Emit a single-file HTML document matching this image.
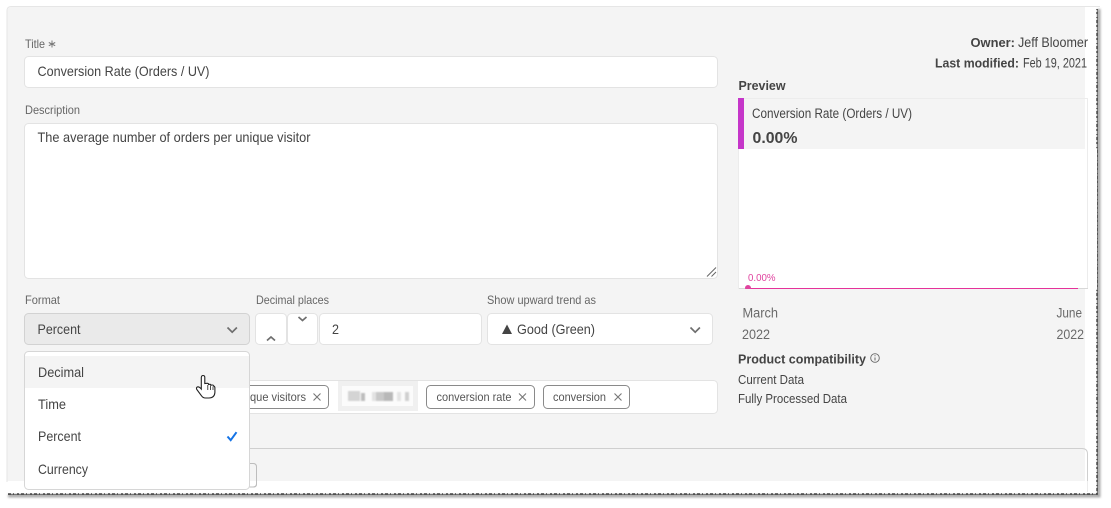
<!DOCTYPE html>
<html><head><meta charset="utf-8"><style>
html,body{margin:0;padding:0;background:#fff;width:1111px;height:508px;overflow:hidden}
svg{display:block}
text{font-family:"Liberation Sans",sans-serif;fill:#444;font-size:14px}
.l{fill:#666;font-size:12px}
.t{font-size:12px;fill:#555}
.b{font-weight:bold;font-size:13px;fill:#444}
.ax{fill:#6a6a6a;font-size:13.5px}
.i{fill:#fff;stroke:#e3e3e3}
.ch{fill:none;stroke:#6e6e6e;stroke-width:1.7}
.x{fill:none;stroke:#777;stroke-width:1.1}
.tag{fill:#fff;stroke:#8a8a8a;stroke-width:1}
</style></head><body>
<svg width="1111" height="508" viewBox="0 0 1111 508" xmlns="http://www.w3.org/2000/svg">
<defs>
<filter id="sh" x="-5%" y="-5%" width="110%" height="110%"><feGaussianBlur stdDeviation="1"/></filter>
<filter id="bl" x="-10%" y="-10%" width="120%" height="120%"><feGaussianBlur stdDeviation="0.7"/></filter>
</defs>
<rect width="1111" height="508" fill="#fff"/>
<!-- torn edge -->
<path d="M8 496H1099V9" fill="none" stroke="#a8a8a8" stroke-width="3" filter="url(#sh)"/>
<path d="M8 494.500H1097.500V9" fill="none" stroke="#777" stroke-width="1.2"/>
<path d="M8 494H1097V9" fill="none" stroke="#444" stroke-width="1.4" stroke-dasharray="3 2 1 3 2 2"/>
<rect x="8" y="8" width="1088" height="485" fill="#fff"/>
<path d="M7 482V11Q7 6.500 11 6.500H1100" fill="none" stroke="#e6e6e6"/>
<path d="M7.500 11Q7.500 7 11 7H1085V481H7.500Z" fill="#f4f4f4"/>

<text class="l" x="25" y="48" textLength="20" lengthAdjust="spacingAndGlyphs">Title</text>
<path d="M52 40.500v7M48.800 42.500l6.400 3.200M55.200 42.500l-6.400 3.200" stroke="#777" stroke-width="1" fill="none"/>
<rect class="i" x="24.500" y="56.500" width="693" height="31" rx="4"/>
<text x="37.500" y="76" textLength="172" lengthAdjust="spacingAndGlyphs">Conversion Rate (Orders / UV)</text>
<text class="l" x="25" y="114" textLength="55" lengthAdjust="spacingAndGlyphs">Description</text>
<rect class="i" x="24.500" y="123.500" width="693" height="155" rx="4"/>
<text x="37.500" y="142" textLength="273" lengthAdjust="spacingAndGlyphs">The average number of orders per unique visitor</text>
<path d="M707 276.500l9-9M711.500 276.500l4.500-4.500" stroke="#666" stroke-width="1"/>

<text class="l" x="25" y="304" textLength="35" lengthAdjust="spacingAndGlyphs">Format</text>
<text class="l" x="256" y="304" textLength="73" lengthAdjust="spacingAndGlyphs">Decimal places</text>
<text class="l" x="487" y="304" textLength="109" lengthAdjust="spacingAndGlyphs">Show upward trend as</text>

<rect x="24.500" y="313.500" width="225" height="31" rx="4" fill="#eaeaea" stroke="#d2d2d2"/>
<text x="37.500" y="334" textLength="43" lengthAdjust="spacingAndGlyphs">Percent</text>
<path class="ch" d="M227.500 327.500l4.700 4.700 4.700-4.700"/>

<rect class="i" x="255.500" y="313.500" width="31" height="31" rx="4"/>
<path class="ch" d="M267 340.500l4-3.500 4 3.500"/>
<rect class="i" x="287.500" y="313.500" width="30" height="31" rx="4"/>
<path class="ch" d="M298.500 317l4 3.500 4-3.500"/>
<rect class="i" x="319.500" y="313.500" width="162" height="31" rx="4"/>
<text x="332" y="334" textLength="7" lengthAdjust="spacingAndGlyphs">2</text>

<rect class="i" x="487.500" y="313.500" width="225" height="31" rx="4"/>
<path d="M502 334l5-9.500 5 9.500z" fill="#444"/>
<text x="517" y="334" textLength="78" lengthAdjust="spacingAndGlyphs">Good (Green)</text>
<path class="ch" d="M690.500 327.500l4.700 4.700 4.700-4.700"/>

<!-- tags -->
<rect class="i" x="230.500" y="380.500" width="487" height="33" rx="4"/>
<rect class="tag" x="200.500" y="385.500" width="128" height="23" rx="4"/>
<text class="t" x="250" y="401" textLength="56" lengthAdjust="spacingAndGlyphs">que visitors</text>
<path class="x" d="M313.500 393.500l7 7M320.500 393.500l-7 7"/>
<rect x="338" y="381" width="80" height="30" fill="#f0f0f0"/>
<rect x="342" y="386" width="71" height="20" fill="#fbfbfb"/>
<g filter="url(#bl)">
<rect x="348" y="391" width="12" height="10" fill="#d4d4d4"/>
<rect x="361" y="393" width="4" height="8" fill="#bdbdbd"/>
<rect x="372" y="392" width="4" height="9" fill="#e2e2e2"/>
<rect x="376" y="392" width="8" height="9" fill="#c8c8c8"/>
<rect x="384" y="392" width="9" height="9" fill="#b8b8b8"/>
<rect x="397" y="392" width="4" height="9" fill="#e4e4e4"/>
<rect x="405" y="392" width="4" height="9" fill="#d0d0d0"/>
</g>
<rect class="tag" x="426.500" y="385.500" width="108" height="23" rx="4"/>
<text class="t" x="436.500" y="401" textLength="75" lengthAdjust="spacingAndGlyphs">conversion rate</text>
<path class="x" d="M519 393.500l7 7M526 393.500l-7 7"/>
<rect class="tag" x="543.500" y="385.500" width="86" height="23" rx="4"/>
<text class="t" x="553" y="401" textLength="53" lengthAdjust="spacingAndGlyphs">conversion</text>
<path class="x" d="M614.500 393.500l7 7M621.500 393.500l-7 7"/>

<!-- lower box -->
<path d="M24 448.500H1082Q1087.500 448.500 1087.500 454V481" fill="none" stroke="#cfcfcf"/>
<rect x="7.500" y="481" width="1078" height="12" fill="#fff"/>
<path d="M1087.500 481V492" stroke="#ececec"/>
<path d="M240 463.500h13q3.500 0 3.500 3.500v17q0 3-3.500 3h-13" fill="#fff" stroke="#bdbdbd"/>
<rect x="240" y="464" width="16" height="17" fill="#f4f4f4"/>
<path d="M240 463.500h13q3.500 0 3.500 3.500v17q0 3-3.500 3h-13" fill="none" stroke="#bdbdbd"/>

<!-- popup -->
<rect x="24.500" y="351.500" width="225" height="138" rx="4" fill="#fff" stroke="#d6d6d6"/>
<rect x="25" y="356" width="224" height="32" fill="#f4f4f4"/>
<text x="38" y="377" textLength="46" lengthAdjust="spacingAndGlyphs">Decimal</text>
<text x="38" y="409" textLength="28" lengthAdjust="spacingAndGlyphs">Time</text>
<text x="38" y="441" textLength="43" lengthAdjust="spacingAndGlyphs">Percent</text>
<text x="38" y="474" textLength="50" lengthAdjust="spacingAndGlyphs">Currency</text>
<path d="M227.500 436.500l3.200 3.700 5.800-8" fill="none" stroke="#1473e6" stroke-width="2"/>

<!-- cursor -->
<path d="M201.300 384V377.500Q201.500 375.500 203 375.500Q204.800 375.500 204.800 377.500V383.500L207 383.300Q208.500 383.200 208.600 384.500Q210.500 383.800 211 385.200Q213.500 384.500 214 386.300Q214.900 386.500 214.900 388V392.500Q214.500 398 209 398H205.500Q202.800 398 201.300 395.500L196.800 389.500Q195.800 387.300 197.800 386.800Q199.500 386.800 201.300 389Z" fill="#fff" stroke="#222" stroke-width="1.1"/>
<path d="M207.800 385v5M210.600 385.500v4.500M213 386.500v3.500" stroke="#222" stroke-width=".8"/>

<!-- right column -->
<text class="b" x="970.500" y="47" textLength="44.500" lengthAdjust="spacingAndGlyphs">Owner:</text>
<text x="1018" y="47" style="font-size:14px" textLength="70" lengthAdjust="spacingAndGlyphs">Jeff Bloomer</text>
<text class="b" x="935" y="67.500" textLength="84" lengthAdjust="spacingAndGlyphs">Last modified:</text>
<text x="1023" y="67.500" style="font-size:14px" textLength="64" lengthAdjust="spacingAndGlyphs">Feb 19, 2021</text>
<text class="b" x="738.500" y="90" textLength="47" lengthAdjust="spacingAndGlyphs">Preview</text>

<rect x="738.500" y="98.500" width="349" height="190" fill="#fff" stroke="#ececec"/>
<rect x="738" y="99" width="347" height="50" fill="#f4f4f4"/>
<rect x="738" y="98" width="6" height="51" fill="#c536c9"/>
<text x="752" y="118" style="font-size:13.500px" textLength="160" lengthAdjust="spacingAndGlyphs">Conversion Rate (Orders / UV)</text>
<text x="752.500" y="143" style="font-size:16px;font-weight:bold" textLength="45" lengthAdjust="spacingAndGlyphs">0.00%</text>
<rect x="1085" y="149" width="12" height="140" fill="#fff"/>
<path d="M1087.500 149V288" stroke="#ececec"/>
<rect x="739" y="288" width="349" height="1" fill="#d8d8d8"/>
<rect x="739" y="289" width="346" height="8" fill="#f4f4f4"/>
<text x="748" y="281" style="font-size:10.500px;fill:#e0439f" textLength="27.500" lengthAdjust="spacingAndGlyphs">0.00%</text>
<rect x="748" y="288" width="330" height="1" fill="#e5329a"/>
<circle cx="748" cy="288" r="3" fill="#e0439f"/>
<rect x="744" y="289" width="10" height="4" fill="#f4f4f4"/>

<text class="ax" x="742.500" y="317.500" textLength="35.500" lengthAdjust="spacingAndGlyphs">March</text>
<text class="ax" x="742" y="339" textLength="28" lengthAdjust="spacingAndGlyphs">2022</text>
<text class="ax" x="1056.500" y="317.500" textLength="25.500" lengthAdjust="spacingAndGlyphs">June</text>
<text class="ax" x="1056.500" y="339" textLength="27.500" lengthAdjust="spacingAndGlyphs">2022</text>

<text class="b" x="738" y="363.500" textLength="128" lengthAdjust="spacingAndGlyphs">Product compatibility</text>
<circle cx="875" cy="358" r="4.300" fill="none" stroke="#666" stroke-width=".9"/>
<path d="M875 357.500v3M875 355.300v1" stroke="#666" stroke-width="1"/>
<text x="738" y="384" style="font-size:13px" textLength="66" lengthAdjust="spacingAndGlyphs">Current Data</text>
<text x="738" y="403" style="font-size:13px" textLength="109" lengthAdjust="spacingAndGlyphs">Fully Processed Data</text>
</svg>
</body></html>
